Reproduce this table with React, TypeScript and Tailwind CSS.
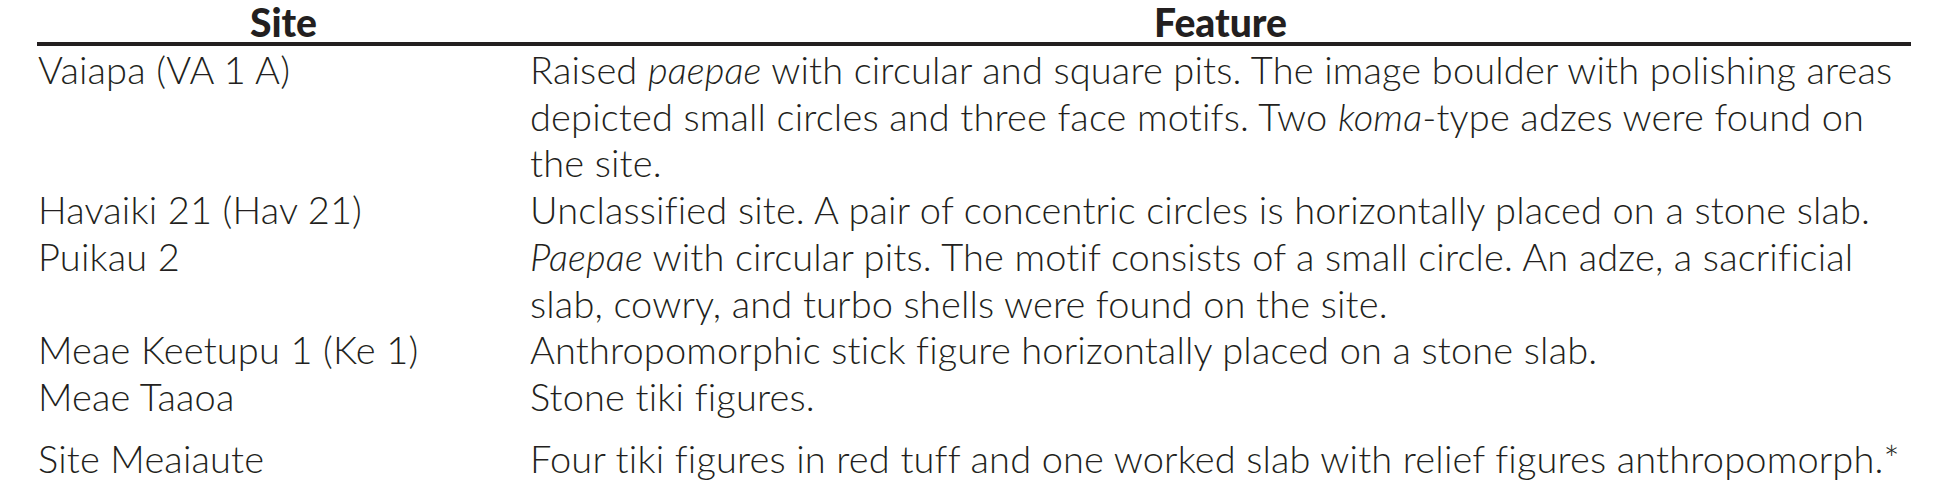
import React from "react";

interface SiteRow {
    site: React.ReactNode;
    feature: React.ReactNode;
    spaced?: boolean;
}

const rows: SiteRow[] = [
    {
        site: "Vaiapa (VA 1 A)",
        feature: (
            <>
                Raised <i>paepae</i> with circular and square pits. The image boulder with polishing areas depicted small
                circles and three face motifs. Two <i>koma</i>-type adzes were found on the site.
            </>
        ),
    },
    {
        site: "Havaiki 21 (Hav 21)",
        feature: "Unclassified site. A pair of concentric circles is horizontally placed on a stone slab.",
    },
    {
        site: "Puikau 2",
        feature: (
            <>
                <i>Paepae</i> with circular pits. The motif consists of a small circle. An adze, a sacrificial slab, cowry, and
                turbo shells were found on the site.
            </>
        ),
    },
    {
        site: "Meae Keetupu 1 (Ke 1)",
        feature: "Anthropomorphic stick figure horizontally placed on a stone slab.",
    },
    {
        site: "Meae Taaoa",
        feature: "Stone tiki figures.",
    },
    {
        site: "Site Meaiaute",
        feature: "Four tiki figures in red tuff and one worked slab with relief figures anthropomorph.*",
        spaced: true,
    },
];

const App: React.FC = () => {
    return (
        <div className="w-[1941px] h-[491px] bg-white overflow-hidden text-[#231f20] font-['Lato',sans-serif]">
            <div className="ml-[37px] w-[1874px]">
                {/* header */}
                <div className="grid grid-cols-[493px_1fr] border-b-4 border-[#231f20] h-[46px] text-[39px] font-black leading-[44px]">
                    <div className="text-center">Site</div>
                    <div className="text-center">Feature</div>
                </div>

                {rows.map((row, i) => (
                    <div
                        key={i}
                        className={`grid grid-cols-[493px_1fr] text-[38px] font-light tracking-[0.15px] leading-[46.7px] ${row.spaced ? "pt-[15px]" : ""}`}
                    >
                        <div className="pl-px">{row.site}</div>
                        <div>{row.feature}</div>
                    </div>
                ))}
            </div>
        </div>
    );
};

export default App;
